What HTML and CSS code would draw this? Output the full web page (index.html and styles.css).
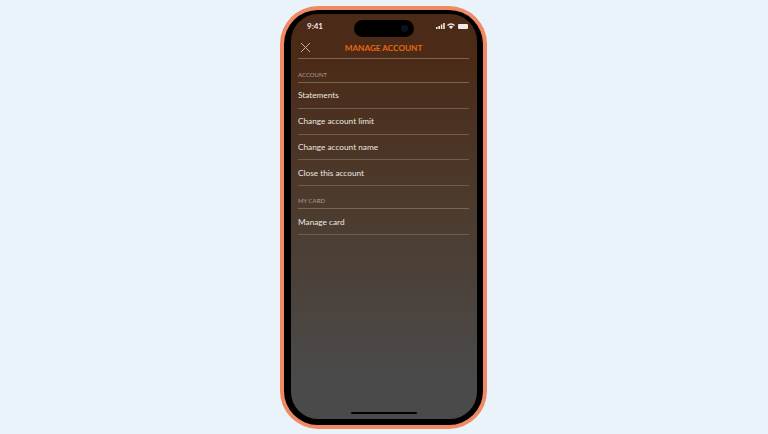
FILE: index.html
```html
<!DOCTYPE html>
<html lang="en">

<head>
    <meta charset="UTF-8">
    <meta name="viewport" content="width=device-width, initial-scale=1.0">
    <title>Manage account</title>
    <link rel="stylesheet" href="styles.css">
</head>

<body>
    <div class="phone">
        <div class="bezel">
            <div class="screen">
                <div class="island"><span class="camera"></span></div>

                <div class="statusbar">
                    <span class="time">9:41</span>
                    <div class="status-icons">
                        <svg width="9" height="6" viewBox="0 0 9 6">
                            <rect x="0" y="4" width="1.6" height="2" fill="#f1e9e2"/>
                            <rect x="2.4" y="3" width="1.6" height="3" fill="#f1e9e2"/>
                            <rect x="4.8" y="1.5" width="1.6" height="4.5" fill="#f1e9e2"/>
                            <rect x="7.2" y="0" width="1.6" height="6" fill="#f1e9e2"/>
                        </svg>
                        <svg width="8" height="6" viewBox="0 0 8 6">
                            <path d="M0 2 A5.6 5.6 0 0 1 8 2 L7 3 A4.2 4.2 0 0 0 1 3 Z" fill="#f1e9e2"/>
                            <path d="M1.8 3.7 A3.2 3.2 0 0 1 6.2 3.7 L4 6 Z" fill="#f1e9e2"/>
                        </svg>
                        <span class="battery"></span>
                    </div>
                </div>

                <div class="header">
                    <svg class="close" width="11" height="11" viewBox="0 0 11 11">
                        <path d="M1 1 L10 10 M10 1 L1 10" stroke="#bfb4aa" stroke-width="1" fill="none"/>
                    </svg>
                    <h1 class="title">MANAGE ACCOUNT</h1>
                </div>

                <div class="section">
                    <h2 class="section-label">ACCOUNT</h2>
                    <a class="row" href="#">Statements</a>
                    <a class="row" href="#">Change account limit</a>
                    <a class="row" href="#">Change account name</a>
                    <a class="row" href="#">Close this account</a>
                </div>

                <div class="section section-card">
                    <h2 class="section-label">MY CARD</h2>
                    <a class="row" href="#">Manage card</a>
                </div>

                <div class="home-bar"></div>
            </div>
        </div>
    </div>
</body>

</html>
```

FILE: styles.css
```css
* {
    box-sizing: border-box;
}

body {
    margin: 0;
    height: 434px;
    overflow: hidden;
    background-color: #eaf3fa;
    font-family: "Lato", "Open Sans", sans-serif;
    display: flex;
    justify-content: center;
    padding-top: 6px;
}

.phone {
    width: 207px;
    height: 423px;
    margin-right: 1px;
    padding: 4px;
    border-radius: 38px;
    background-color: #f08a64;
}

.bezel {
    height: 100%;
    padding: 4px 6px 6px 7px;
    border-radius: 34px;
    background-color: #000000;
}

.screen {
    position: relative;
    height: 100%;
    padding: 0 8px 0 7px;
    display: flex;
    flex-direction: column;
    border-radius: 27px;
    background: linear-gradient(180deg, #4b2b18 0%, #4b2b18 12%, #4c3c30 50%, #4b4a4a 90%, #4b4a4a 100%);
}

.island {
    position: absolute;
    top: 6px;
    left: 63px;
    width: 60px;
    height: 17px;
    border-radius: 9px;
    background-color: #000000;
}

.camera {
    position: absolute;
    top: 5px;
    right: 6px;
    width: 7px;
    height: 7px;
    border-radius: 50%;
    background-color: #0e1220;
}

.statusbar {
    height: 24px;
    padding: 0 1px 0 9px;
    display: flex;
    justify-content: space-between;
    align-items: center;
}

.time {
    font-size: 8px;
    font-weight: 700;
    color: #efe7e0;
}

.status-icons {
    display: flex;
    align-items: center;
    gap: 2px;
}

.battery {
    width: 10px;
    height: 5px;
    margin-left: 1px;
    border-radius: 1px;
    background-color: #f1e9e2;
}

.header {
    position: relative;
    height: 21px;
    display: flex;
    justify-content: center;
    align-items: center;
    border-bottom: 1px solid #7b6656;
}

.close {
    position: absolute;
    left: 2px;
    top: 4px;
}

.title {
    margin: 0;
    font-size: 8.2px;
    font-weight: 700;
    color: #e8670f;
}

.section {
    padding-top: 11px;
}

.section-card {
    padding-top: 10px;
}

.section-label {
    margin: 0;
    height: 13px;
    font-size: 6px;
    font-weight: 400;
    line-height: 10px;
    color: #ab9f96;
    border-bottom: 1px solid #7b6656;
}

.row {
    display: flex;
    align-items: center;
    height: 25.8px;
    font-size: 8.25px;
    color: #ece6e0;
    text-decoration: none;
    border-bottom: 1px solid #6f5d4f;
}

.home-bar {
    position: absolute;
    bottom: 5px;
    left: 60px;
    width: 66px;
    height: 2px;
    border-radius: 1px;
    background-color: #000000;
}
```
